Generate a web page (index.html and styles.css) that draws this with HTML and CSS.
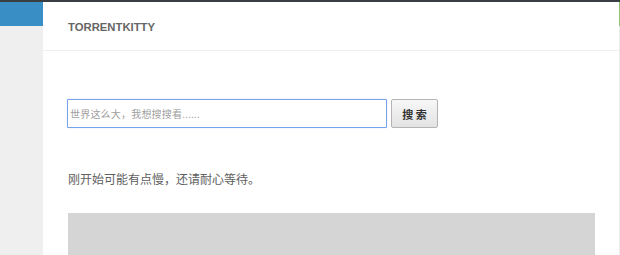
FILE: index.html
```html
<!DOCTYPE html>
<html lang="zh">
<head>
<meta charset="utf-8">
<title>TorrentKitty</title>
<link rel="stylesheet" href="styles.css">
</head>
<body>
<div class="topbar"></div>
<div class="layout">
  <aside class="sidebar"><div class="sidebar-active"></div></aside>
  <main class="main">
    <header class="header">
      <h1 class="brand">TORRENTKITTY</h1>
      <span class="scroll-mark"></span>
    </header>
    <section class="content">
      <form class="search">
        <input class="search-input" type="text" placeholder="世界这么大，我想搜搜看......">
        <button class="search-btn" type="button">搜 索</button>
      </form>
      <p class="notice">刚开始可能有点慢，还请耐心等待。</p>
      <div class="result-box"></div>
    </section>
  </main>
</div>
</body>
</html>
```
FILE: styles.css
```css
* { box-sizing: border-box; }
html, body { margin: 0; padding: 0; height: 100%; }
body {
  font-family: "Liberation Sans", "Noto Sans CJK SC", sans-serif;
  background: #fff;
  overflow: hidden;
}
.topbar { height: 2px; background: #3a3d41; }
.layout { display: flex; height: 253px; overflow: hidden; }
.sidebar { width: 43px; background: #efefef; flex: none; }
.sidebar-active { height: 24px; background: #388ec5; }
.main {
  flex: 1;
  background: #fff;
  border-right: 1px solid #ececec;
  display: flex;
  flex-direction: column;
  min-height: 0;
}
.header {
  flex: none;
  position: relative;
  height: 49px;
  border-bottom: 1px solid #eeeeee;
  display: flex;
  align-items: center;
  padding-left: 25px;
}
.brand {
  margin: 1px 0 0;
  font-family: "Liberation Sans", sans-serif;
  font-size: 11.3px;
  font-weight: bold;
  color: #666;
  letter-spacing: 0;
}
.scroll-mark {
  position: absolute;
  right: -1px;
  top: 0;
  width: 1px;
  height: 24px;
  background: #8fc572;
}
.content { flex: none; padding: 48px 0 0 24px; }
.search { display: flex; gap: 4px; margin: 0; }
.search-input {
  width: 320px;
  height: 29px;
  border: 1px solid #76a3ec;
  border-radius: 1px;
  padding: 0 0 0 2px;
  font-family: "Noto Sans CJK SC", sans-serif;
  font-size: 10px;
  outline: none;
  box-shadow: 0 0 1px #9fc0f4;
}
.search-input::placeholder { color: #a0a0a0; letter-spacing: 0.2px; }
.search-btn {
  width: 47px;
  height: 29px;
  border: 1px solid #b4b4b4;
  border-radius: 2px;
  background: linear-gradient(#f7f7f7, #e3e3e3);
  font-family: "Noto Sans CJK SC", sans-serif;
  font-size: 11px;
  font-weight: bold;
  color: #333;
  padding: 0;
}
.notice {
  margin: 41px 0 0 1px;
  font-family: "Noto Sans CJK SC", sans-serif;
  font-size: 12px;
  color: #606060;
  line-height: 20px;
}
.result-box {
  margin-top: 24px;
  margin-left: 1px;
  width: 527px;
  height: 60px;
  background: #d5d5d5;
}
```
